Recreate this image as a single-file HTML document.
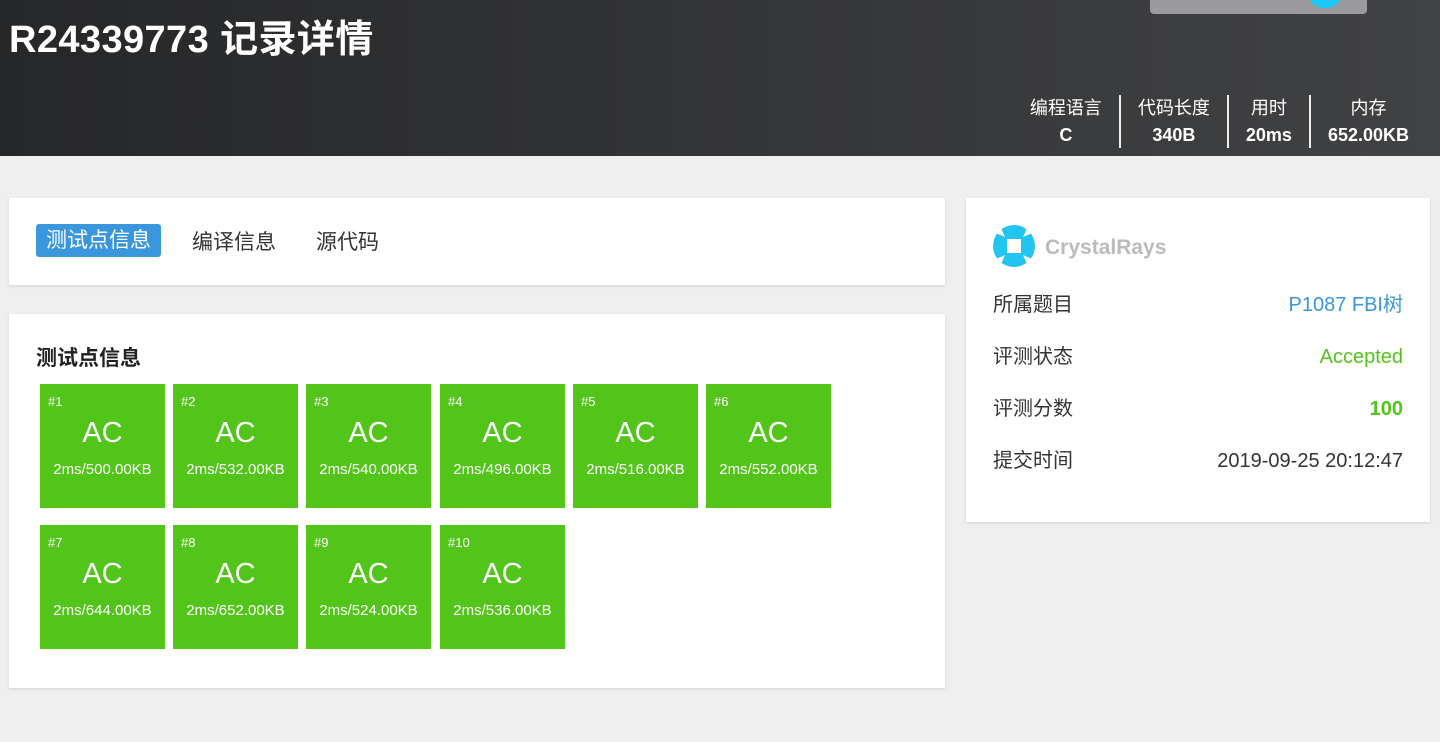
<!DOCTYPE html>
<html><head><meta charset="utf-8"><style>
*{margin:0;padding:0;box-sizing:border-box}
body{width:1440px;height:742px;background:#efefef;font-family:"Liberation Sans","Noto Sans CJK SC",sans-serif;position:relative;overflow:hidden;color:#333}
.hdr{position:absolute;left:0;top:0;width:1440px;height:156px;background:linear-gradient(90deg,#262729,#414244)}
.hdr h1{position:absolute;left:9px;top:14px;font-size:38px;line-height:52px;color:#fff;font-weight:bold;letter-spacing:0.4px}
.gbox{position:absolute;left:1150px;top:-6px;width:217px;height:20px;background:#9b9b9d;border-radius:4px;overflow:hidden}
.gbox i{position:absolute;left:160px;top:-6px;width:30px;height:20px;border-radius:50%;background:#1ec8f5}
.stats{position:absolute;right:14px;top:95px;display:flex;color:#fff;text-align:center}
.stats div{padding:0 17px;border-left:2px solid #eee;height:53px;line-height:27px;font-size:18px}
.stats div:first-child{border-left:none}
.stats b{display:block;font-size:18px}
.card{position:absolute;background:#fff;box-shadow:0 1px 3px rgba(0,0,0,.12)}
.tab{position:absolute;top:28px;font-size:21px;color:#333}
.tab.on{background:#3a97dd;color:#fff;border-radius:3px;padding:0 10px;height:33px;line-height:33px;top:26px}
.t{position:absolute;width:125px;height:124px;background:#52c41a;color:#fff;text-align:center}
.t .n{position:absolute;left:8px;top:10px;font-size:13px}
.t .a{position:absolute;left:0;right:0;top:33px;font-size:29px}
.t .m{position:absolute;left:0;right:0;top:77px;font-size:15px}
.row{position:absolute;left:27px;right:27px;font-size:20px;line-height:30px;height:30px;color:#333}
.row span{position:absolute;right:0;top:0;line-height:30px}
</style></head><body>
<div class="hdr"><h1>R24339773 记录详情</h1><div class="gbox"><i></i></div>
<div class="stats"><div>编程语言<b>C</b></div><div>代码长度<b>340B</b></div><div>用时<b>20ms</b></div><div>内存<b>652.00KB</b></div></div></div>
<div class="card" style="left:9px;top:198px;width:936px;height:87px">
<div class="tab on" style="left:27px">测试点信息</div>
<div class="tab" style="left:183px">编译信息</div>
<div class="tab" style="left:307px">源代码</div></div>
<div class="card" style="left:9px;top:314px;width:936px;height:374px">
<div style="position:absolute;left:27px;top:28px;font-size:21px;font-weight:bold;color:#222">测试点信息</div>
<div class="t" style="left:31px;top:70px"><div class="n">#1</div><div class="a">AC</div><div class="m">2ms/500.00KB</div></div>
<div class="t" style="left:164px;top:70px"><div class="n">#2</div><div class="a">AC</div><div class="m">2ms/532.00KB</div></div>
<div class="t" style="left:297px;top:70px"><div class="n">#3</div><div class="a">AC</div><div class="m">2ms/540.00KB</div></div>
<div class="t" style="left:431px;top:70px"><div class="n">#4</div><div class="a">AC</div><div class="m">2ms/496.00KB</div></div>
<div class="t" style="left:564px;top:70px"><div class="n">#5</div><div class="a">AC</div><div class="m">2ms/516.00KB</div></div>
<div class="t" style="left:697px;top:70px"><div class="n">#6</div><div class="a">AC</div><div class="m">2ms/552.00KB</div></div>
<div class="t" style="left:31px;top:211px"><div class="n">#7</div><div class="a">AC</div><div class="m">2ms/644.00KB</div></div>
<div class="t" style="left:164px;top:211px"><div class="n">#8</div><div class="a">AC</div><div class="m">2ms/652.00KB</div></div>
<div class="t" style="left:297px;top:211px"><div class="n">#9</div><div class="a">AC</div><div class="m">2ms/524.00KB</div></div>
<div class="t" style="left:431px;top:211px"><div class="n">#10</div><div class="a">AC</div><div class="m">2ms/536.00KB</div></div>
</div>
<div class="card" style="left:966px;top:198px;width:464px;height:324px">
<svg style="position:absolute;left:27px;top:27px" width="42" height="42" viewBox="0 0 42 42">
<circle cx="21" cy="21" r="21" fill="#22c4f0"/>
<rect x="14" y="14" width="14" height="14" fill="#fff"/>
<polygon points="3,8 8,3 12,12" fill="#fff"/><polygon points="39,8 34,3 30,12" fill="#fff"/>
<polygon points="3,34 8,39 12,30" fill="#fff"/><polygon points="39,34 34,39 30,30" fill="#fff"/>
</svg>
<div style="position:absolute;left:79px;top:38px;font-size:21px;font-weight:bold;color:#bbb">CrystalRays</div>
<div class="row" style="top:92px">所属题目<span style="color:#3a97dd">P1087 FBI树</span></div>
<div class="row" style="top:144px">评测状态<span style="color:#52c41a">Accepted</span></div>
<div class="row" style="top:196px">评测分数<span style="color:#52c41a;font-weight:bold">100</span></div>
<div class="row" style="top:248px">提交时间<span>2019-09-25 20:12:47</span></div>
</div>
</body></html>
